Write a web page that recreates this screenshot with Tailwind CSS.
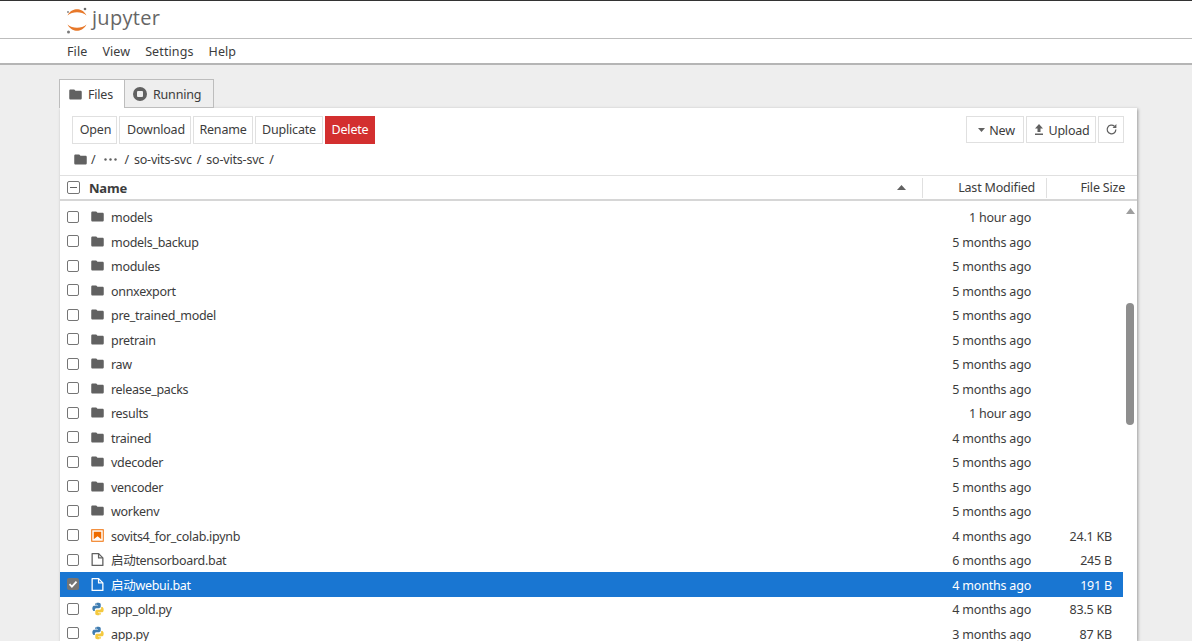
<!DOCTYPE html>
<html lang="en">
<head>
    <meta charset="UTF-8">
    <meta name="viewport" content="width=device-width, initial-scale=1.0">
    <title>Jupyter</title>
    <script src="https://cdn.jsdelivr.net/npm/@tailwindcss/browser@4"></script>
</head>
<body class="h-[641px] overflow-hidden bg-[#eeeeee] font-['Noto_Sans','Noto_Sans_CJK_SC',sans-serif] text-[12.5px] tracking-[-0.2px] text-[#3c3c3c]">
    <!-- top bars -->
    <div class="h-[39px] bg-white border-t border-t-[#333333] border-b border-b-[#bdbdbd] pl-[65px] flex items-center gap-[3px]">
        <svg width="24" height="30" viewBox="0 0 24 30">
            <path d="M2.5 10.5C5 5.6 9 4.3 12 4.3s7 1.3 9.500 6.200C19 8.200 15.500 7.300 12 7.300S5 8.200 2.500 10.500z" fill="#e7782a"/>
            <path d="M2.500 19.500C5 24.400 9 25.700 12 25.700s7-1.300 9.500-6.200C19 21.800 15.500 22.700 12 22.700S5 21.800 2.500 19.500z" fill="#e7782a"/>
            <circle cx="20" cy="4" r="1.300" fill="#6b6b6b"/>
            <circle cx="3" cy="7" r="1" fill="#8a8a8a"/>
            <circle cx="3.500" cy="27" r="1.500" fill="#7a7a7a"/>
        </svg>
        <span class="pb-[3px] text-[20px] tracking-[0.3px] text-[#666666] font-['Open_Sans',sans-serif]">jupyter</span>
    </div>
    <div class="h-[26px] bg-white border-b-2 border-b-[#b5b5b5] pl-[67px] pt-[3px] flex items-center gap-[15px] tracking-[0.1px]">
        <span>File</span><span>View</span><span>Settings</span><span>Help</span>
    </div>

    <div class="pl-[59px] pr-[54px] pt-[14px]">
        <!-- tabs -->
        <div class="flex h-[29px]">
            <div class="w-[66px] bg-white border border-[#bdbdbd] border-b-0 flex items-center pl-[8px] gap-[5px]">
                <svg width="15" height="15" viewBox="0 0 24 24" fill="#616161"><path d="M10 4H4c-1.100 0-1.990.900-1.990 2L2 18c0 1.100.900 2 2 2h16c1.100 0 2-.900 2-2V8c0-1.100-.900-2-2-2h-8l-2-2z"/></svg>
                <span class="pt-[2px]">Files</span>
            </div>
            <div class="w-[89px] bg-[#eeeeee] border border-l-0 border-[#bdbdbd] flex items-center pl-[8px] gap-[6px]">
                <svg width="14" height="14" viewBox="0 0 14 14"><circle cx="7" cy="7" r="7" fill="#616161"/><rect x="4" y="4" width="6" height="6" rx="1" fill="#eeeeee"/></svg>
                <span class="pt-[3px]">Running</span>
            </div>
        </div>

        <!-- panel -->
        <div class="ml-px w-[1077px] h-[533px] bg-white shadow-[1px_1px_3px_rgba(0,0,0,0.35)] flex flex-col">
            <div class="h-[36px] pl-[12px] pr-[13px] pt-[8px] flex justify-between">
                <div class="flex gap-[2px] h-[28px]">
                    <div class="border border-[#e0e0e0] w-[45px] pt-px pl-[2px] flex items-center justify-center">Open</div>
                    <div class="border border-[#e0e0e0] w-[72px] pt-px pl-[2px] flex items-center justify-center">Download</div>
                    <div class="border border-[#e0e0e0] w-[60px] pt-px flex items-center justify-center">Rename</div>
                    <div class="border border-[#e0e0e0] w-[68px] pt-px flex items-center justify-center">Duplicate</div>
                    <div class="bg-[#d32f2f] text-white w-[50px] pt-px flex items-center justify-center">Delete</div>
                </div>
                <div class="flex gap-[2px] h-[27px]">
                    <div class="border border-[#e0e0e0] w-[58px] pl-[3px] flex items-center justify-center gap-[4px]">
                        <svg width="7" height="4" viewBox="0 0 7 4" fill="#616161"><path d="M0 0h7L3.500 4z"/></svg>
                        <span class="pt-[3px]">New</span>
                    </div>
                    <div class="border border-[#e0e0e0] w-[70px] pl-[2px] flex items-center justify-center gap-[4px]">
                        <svg width="10" height="11" viewBox="0 0 10 11" fill="#616161"><path d="M5 0l4 4.500H6.500V8h-3V4.500H1zM1 9.500h8V11H1z"/></svg>
                        <span class="pt-[3px]">Upload</span>
                    </div>
                    <div class="border border-[#e0e0e0] w-[26px] flex items-center justify-center">
                        <svg width="13" height="13" viewBox="0 0 24 24" fill="none" stroke="#616161" stroke-width="2.400"><path d="M20 12a8 8 0 1 1-2.600-5.900"/><path d="M21 2v7h-7z" fill="#616161" stroke="none"/></svg>
                    </div>
                </div>
            </div>

            <!-- breadcrumbs -->
            <div class="h-[31px] pl-[13px] flex items-center whitespace-pre">
                <svg width="15" height="15" viewBox="0 0 24 24" fill="#616161"><path d="M10 4H4c-1.100 0-1.990.900-1.990 2L2 18c0 1.100.900 2 2 2h16c1.100 0 2-.900 2-2V8c0-1.100-.900-2-2-2h-8l-2-2z"/></svg>
                <span class="ml-[3px] pt-[2px]">/</span>
                <svg class="ml-[9px]" width="13" height="3" viewBox="0 0 13 3" fill="#616161"><circle cx="1.500" cy="1.500" r="1.200"/><circle cx="6.500" cy="1.500" r="1.200"/><circle cx="11.500" cy="1.500" r="1.200"/></svg>
                <span class="ml-[7px] pt-[2px] [word-spacing:2px]">/ so-vits-svc / so-vits-svc /</span>
            </div>

            <!-- column headers -->
            <div class="h-[26px] flex items-center border-t border-t-[#e0e0e0] border-b-2 border-b-[#d6d6d6]">
                <span class="ml-[7px] w-[13px] h-[13px] border border-[#757575] rounded-[2px] flex items-center justify-center"><span class="w-[7px] h-px bg-[#616161]"></span></span>
                <span class="ml-[9px] pt-[2px] flex-1 font-bold text-[13px]">Name</span>
                <svg class="mr-[16px]" width="9" height="5" viewBox="0 0 9 5" fill="#616161"><path d="M4.500 0L9 5H0z"/></svg>
                <span class="w-[124px] h-[20px] pt-[2px] border-l border-[#e0e0e0] flex items-center justify-end pr-[11px]">Last Modified</span>
                <span class="w-[91px] h-[20px] pt-[2px] border-l border-[#e0e0e0] flex items-center justify-end pr-[12px]">File Size</span>
            </div>

            <!-- listing -->
            <div class="flex flex-1 min-h-0 overflow-hidden">
                <div id="rows" class="w-[1063px] pt-[3.5px]"></div>
                <div class="flex-1 relative">
                    <svg class="absolute left-[3px] top-[7px]" width="9" height="6" viewBox="0 0 9 6" fill="#9e9e9e"><path d="M4.500 0L9 6H0z"/></svg>
                    <div class="absolute left-[3px] top-[102px] w-[8px] h-[122px] rounded-[4px] bg-[#8e8e8e]"></div>
                </div>
            </div>
        </div>
    </div>

    <script>
        const folder = '<svg width="15" height="15" viewBox="0 0 24 24" fill="#616161"><path d="M10 4H4c-1.100 0-1.990.900-1.990 2L2 18c0 1.100.900 2 2 2h16c1.100 0 2-.900 2-2V8c0-1.100-.900-2-2-2h-8l-2-2z"/></svg>';
        const notebook = '<svg width="15" height="15" viewBox="0 0 22 22" fill="#ef6c00"><path d="M18.700 3.300v15.400H3.300V3.300h15.400m1.500-1.500H1.800v18.300h18.300l.1-18.300z"/><path d="M16.500 16.500l-5.400-4.300-5.600 4.300v-11h11z"/></svg>';
        const python = '<svg width="14" height="14" viewBox="0 0 20 20"><path fill="#3f7cb0" d="M9.860 1C5.800 1 6.100 2.800 6.100 2.800v1.900H10v.6H4.500S1.900 5 1.900 9.100s2.300 3.900 2.300 3.900h1.300v-1.900s-.1-2.300 2.300-2.300h3.900s2.200 0 2.200-2.200V3.100S14 1 9.860 1zM7.700 2.200a.7.700 0 1 1 0 1.400.7.700 0 0 1 0-1.400z"/><path fill="#f4c93f" d="M10.140 19c4.060 0 3.760-1.800 3.760-1.800v-1.900H10v-.6h5.500s2.600.3 2.600-3.800-2.300-3.900-2.300-3.900h-1.300v1.900s.1 2.300-2.300 2.300H8.300s-2.200 0-2.200 2.200v3.500S6 19 10.140 19zm2.160-1.200a.7.700 0 1 1 0-1.400.7.700 0 0 1 0 1.400z"/></svg>';
        const file = (c) => `<svg width="15" height="15" viewBox="0 0 14 14" fill="none" stroke="${c}" stroke-width="1.200" stroke-linejoin="round"><path d="M2 1.500h6l4 4v7H2z"/><path d="M8 1.500v4h4"/></svg>`;

        const items = [
            [folder, 'models', '1 hour ago', ''],
            [folder, 'models_backup', '5 months ago', ''],
            [folder, 'modules', '5 months ago', ''],
            [folder, 'onnxexport', '5 months ago', ''],
            [folder, 'pre_trained_model', '5 months ago', ''],
            [folder, 'pretrain', '5 months ago', ''],
            [folder, 'raw', '5 months ago', ''],
            [folder, 'release_packs', '5 months ago', ''],
            [folder, 'results', '1 hour ago', ''],
            [folder, 'trained', '4 months ago', ''],
            [folder, 'vdecoder', '5 months ago', ''],
            [folder, 'vencoder', '5 months ago', ''],
            [folder, 'workenv', '5 months ago', ''],
            [notebook, 'sovits4_for_colab.ipynb', '4 months ago', '24.1 KB'],
            [file('#616161'), '启动tensorboard.bat', '6 months ago', '245 B'],
            [file('#ffffff'), '启动webui.bat', '4 months ago', '191 B', true],
            [python, 'app_old.py', '4 months ago', '83.5 KB'],
            [python, 'app.py', '3 months ago', '87 KB'],
        ];

        document.getElementById('rows').innerHTML = items.map(([icon, name, modified, size, selected]) => `
            <div class="h-[24.5px] flex items-center ${selected ? 'bg-[#1976d2] text-white' : ''}">
                <span class="ml-[7px] w-[12px] h-[12px] rounded-[2px] flex items-center justify-center ${selected ? 'bg-[#757575]' : 'border border-[#757575]'}">
                    ${selected ? '<svg width="10" height="10" viewBox="0 0 10 10" fill="none" stroke="#ffffff" stroke-width="1.800"><path d="M1.500 5.200l2.400 2.400 4.600-5"/></svg>' : ''}
                </span>
                <span class="ml-[11px] w-[15px] h-[15px] flex items-center justify-center">${icon}</span>
                <span class="ml-[6px] pt-[3.5px] flex-1 tracking-[-0.3px]">${name}</span>
                <span class="w-[120px] pt-[3.5px] text-right pr-[17px]">${modified}</span>
                <span class="w-[75px] pt-[3.5px] text-right pr-[11px]">${size}</span>
            </div>`).join('');
    </script>
</body>
</html>
